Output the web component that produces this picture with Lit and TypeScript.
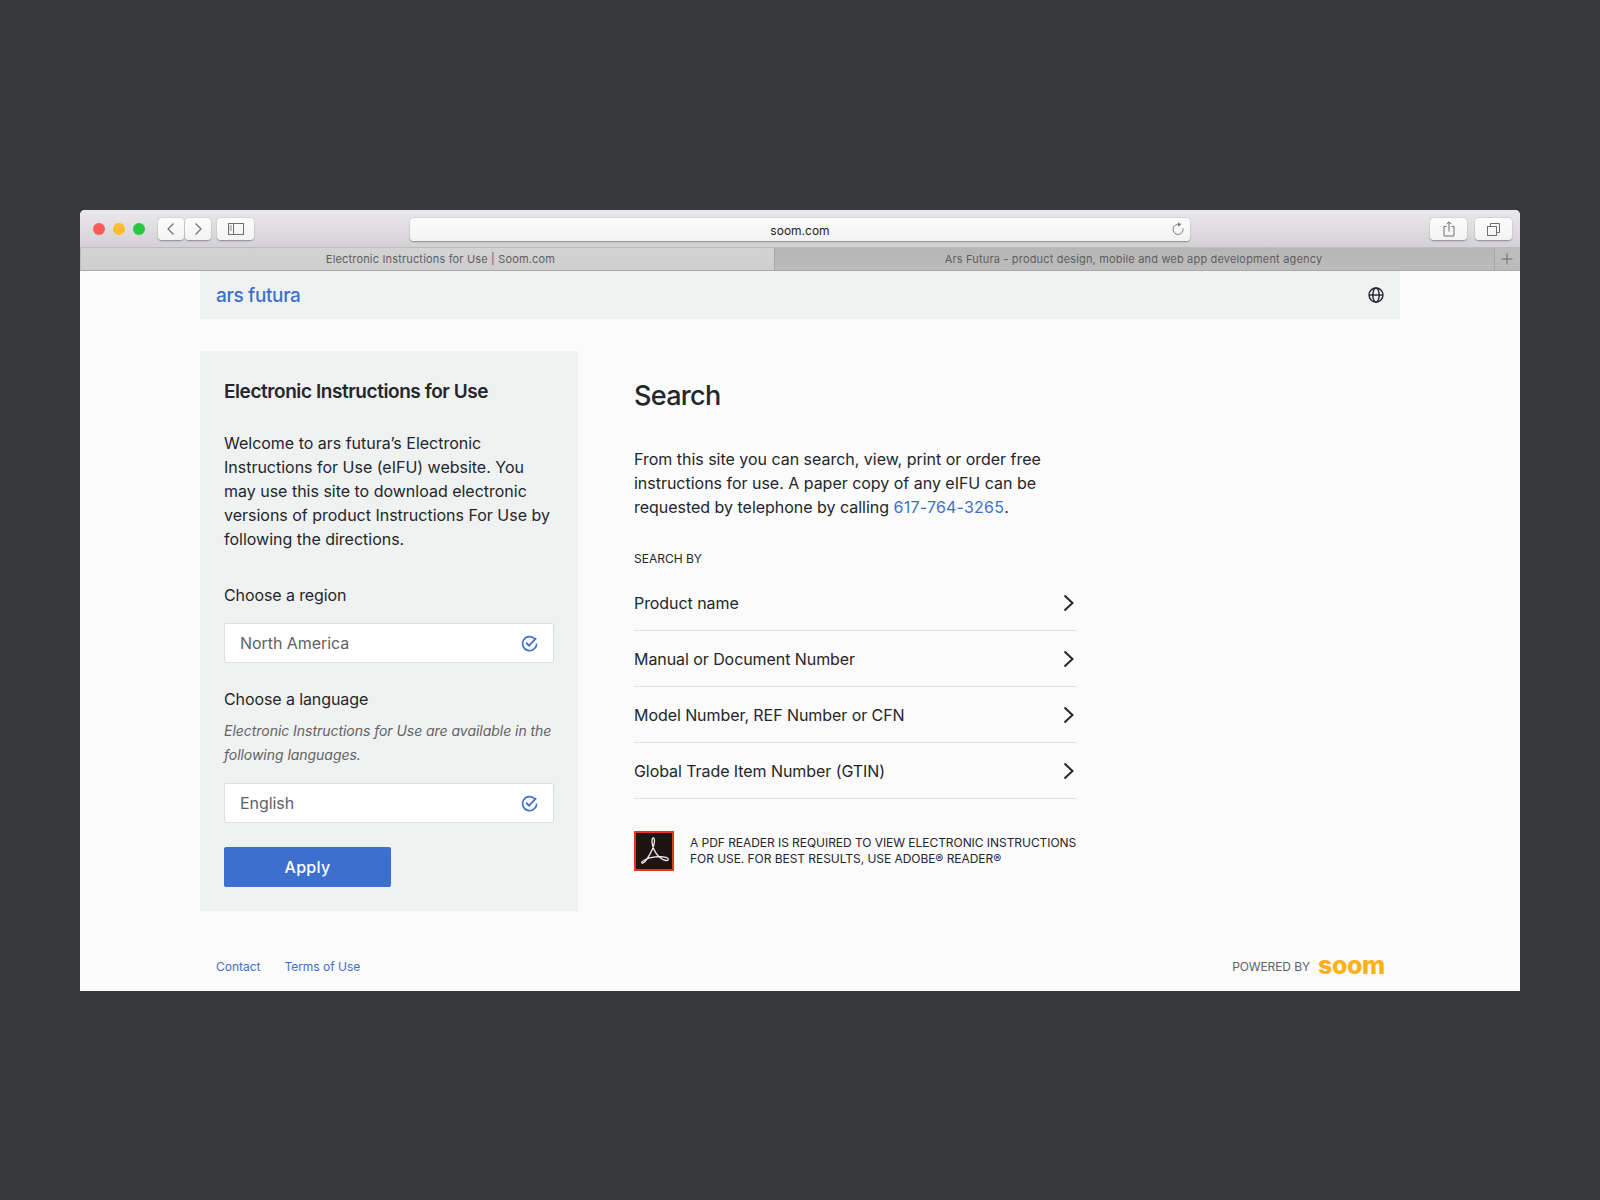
import { LitElement, html, css } from "lit";
import { customElement } from "lit/decorators.js";

const chevron = html`<svg class="chev" width="12" height="18" viewBox="0 0 12 18"><path d="M1.5 1.5 L9.5 9 L1.5 16.5" fill="none" stroke="#23262b" stroke-width="2"/></svg>`;
const check = html`<svg class="check" width="17" height="17" viewBox="0 0 17 17" fill="none" stroke="#3d70ce" stroke-width="1.6"><path d="M14 4.2 A7 7 0 1 0 15.6 8.5"/><path d="M5 7.6 L8 10.6 L15.2 3.2" stroke-width="1.8"/></svg>`;

@customElement("app-root")
export class AppRoot extends LitElement {
  static styles = css`
    :host { display: block; width: 1600px; height: 1200px; background: #38393b; font-family: Inter, "Liberation Sans", sans-serif; color: #23262b; box-sizing: border-box; padding: 210px 80px 0; }
    * { box-sizing: border-box; }
    .window { width: 1440px; height: 781px; background: #fbfbfb; border-radius: 5px 5px 0 0; overflow: hidden; display: flex; flex-direction: column; }
    .titlebar { height: 38px; flex: none; background: linear-gradient(#ebe9ec, #d3d1d4); display: flex; align-items: center; padding: 1px 8px 0 13px; border-bottom: 1px solid #bdbcbd; }
    .lights { display: flex; gap: 8px; margin-right: 13px; }
    .lights i { width: 12px; height: 12px; border-radius: 50%; display: block; }
    .tb { height: 22px; background: linear-gradient(#fcfcfc, #f3f3f3); border-radius: 4px; box-shadow: 0 0.5px 1.5px rgba(0,0,0,.35); display: flex; align-items: center; justify-content: center; flex: none; }
    .nav { display: flex; gap: 1px; margin-right: 6px; }
    .nav .tb { width: 26px; }
    .side { width: 37px; }
    .url { width: 780px; margin-left: 156px; height: 23px; justify-content: center; font-size: 12px; position: relative; color: #1d1d1f; padding-top: 2px; }
    .reload { position: absolute; right: 5px; top: 4px; }
    .right { margin-left: auto; display: flex; gap: 8px; }
    .right .tb { width: 37px; }
    .tabs { height: 23px; flex: none; display: flex; font-size: 11px; color: #5d5d5f; letter-spacing: 0.17px; border-bottom: 1px solid #a9a9aa; }
    .tab { display: flex; align-items: center; justify-content: center; }
    .tab.active { width: 694px; background: linear-gradient(#d4d3d4, #cfcecf); border-left: 1px solid #bbb; padding-left: 26px; }
    .tab.other { width: 720px; background: linear-gradient(#b6b6b6, #bcbcbc); border-left: 1px solid #a8a8a8; padding-right: 2px; }
    .tab.plus { width: 26px; background: #bcbcbc; border-left: 1px solid #a8a8a8; padding-right: 2px; }
    .page { flex: 1; width: 1200px; margin: 0 auto; display: flex; flex-direction: column; }
    .header { height: 48px; flex: none; background: #f0f2f1; display: flex; align-items: center; justify-content: space-between; padding: 0 16px; }
    .brand { color: #3d70ce; font-size: 19px; font-weight: 500; letter-spacing: -0.35px; }
    .content { display: flex; margin-top: 32px; gap: 56px; }
    .sidebar { width: 378px; height: 560px; background: #f0f2f1; padding: 29px 24px 0; flex: none; }
    .sidebar h2 { margin: 0; font-size: 19px; line-height: 24px; font-weight: 600; letter-spacing: -0.43px; }
    .sidebar p.intro { margin: 27px 0 0; font-size: 16px; line-height: 24px; letter-spacing: -0.01px; }
    .label { font-size: 16px; line-height: 24px; letter-spacing: -0.1px; }
    .label.region { margin-top: 32px; }
    .label.lang { margin-top: 24px; }
    .select { height: 40px; width: 330px; background: #fff; border: 1px solid #dcdfdf; border-radius: 2px; display: flex; align-items: center; justify-content: space-between; padding: 0 15px; font-size: 16px; color: #5f6266; letter-spacing: -0.06px; }
    .select.first { margin-top: 16px; }
    .select.second { margin-top: 16px; }
    .note { margin: 8px 0 0; font-size: 14px; line-height: 24px; font-style: italic; color: #5f6266; letter-spacing: -0.04px; }
    .apply { display: flex; width: 167px; height: 40px; margin-top: 24px; align-items: center; justify-content: center; background: #3d70ce; color: #fff; border-radius: 2px; font-size: 16px; font-weight: 500; letter-spacing: 0.3px; }
    .main { width: 442px; flex: none; }
    .main h1 { margin: 27px 0 0; font-size: 27px; line-height: 36px; font-weight: 500; letter-spacing: -0.7px; }
    .main p.lead { margin: 33px 0 0; font-size: 16px; line-height: 24px; letter-spacing: -0.02px; }
    .main p.lead a { letter-spacing: 0.22px; }
    a { color: #3d70ce; text-decoration: none; }
    .by { margin-top: 32px; font-size: 12px; line-height: 16px; }
    .rows { margin-top: 8px; }
    .row { height: 56px; display: flex; align-items: center; justify-content: space-between; border-bottom: 1px solid #dfe0e0; font-size: 16px; letter-spacing: -0.07px; padding-right: 1px; padding-top: 1px; }
    .pdf { display: flex; align-items: center; gap: 16px; margin-top: 32px; font-size: 12px; line-height: 16px; letter-spacing: -0.05px; white-space: nowrap; }
    .adobe { width: 40px; height: 40px; flex: none; display: block; }
    .footer { display: flex; align-items: center; justify-content: space-between; margin-top: 40px; padding: 0 16px; height: 30px; font-size: 12px; }
    .links { display: flex; gap: 24px; letter-spacing: -0.02px; }
    .powered { display: flex; align-items: center; gap: 8px; color: #5f6266; letter-spacing: -0.1px; }
    .soom { color: #fdb01c; font-size: 25px; line-height: 20px; font-weight: 800; letter-spacing: -0.4px; width: 66px; margin-top: -2px; }
  `;

  render() {
    return html`<div class="window">
      <div class="titlebar">
        <div class="lights"><i style="background:#fc5b57"></i><i style="background:#fdbc2e"></i><i style="background:#27c840"></i></div>
        <div class="nav">
          <div class="tb"><svg width="10" height="14" viewBox="0 0 10 14"><path d="M7.5 1.5 L2 7 L7.5 12.5" fill="none" stroke="#6f6f71" stroke-width="1.2"/></svg></div>
          <div class="tb"><svg width="10" height="14" viewBox="0 0 10 14"><path d="M2.5 1.5 L8 7 L2.5 12.5" fill="none" stroke="#6f6f71" stroke-width="1.2"/></svg></div>
        </div>
        <div class="tb side"><svg width="16" height="12" viewBox="0 0 16 12" fill="none" stroke="#6f6f71"><rect x="0.5" y="0.5" width="15" height="11"/><path d="M5.5 0.5 V11.5"/><path d="M1.5 3 H4 M1.5 5 H4 M1.5 7 H4" stroke-width="0.8"/></svg></div>
        <div class="tb url">soom.com
          <svg class="reload" width="14" height="14" viewBox="0 0 14 14" fill="none" stroke="#7a7a7c" stroke-width="1"><path d="M8.5 2.6 A5 5 0 1 0 12 6.5"/><path d="M7 0.3 L10.3 2.5 L7 4.7 Z" fill="#7a7a7c" stroke="none"/></svg>
        </div>
        <div class="right">
          <div class="tb"><svg width="12" height="16" viewBox="0 0 12 16" fill="none" stroke="#6f6f71"><path d="M3.5 5.5 H1 V15 H11 V5.5 H8.5"/><path d="M6 10.5 V1"/><path d="M3.6 3.2 L6 0.8 L8.4 3.2"/></svg></div>
          <div class="tb"><svg width="13" height="13" viewBox="0 0 13 13" fill="none" stroke="#6f6f71"><rect x="0.5" y="3.5" width="9" height="9"/><path d="M3.5 3.5 V0.5 H12.5 V9.5 H9.5"/></svg></div>
        </div>
      </div>
      <div class="tabs">
        <div class="tab active">Electronic Instructions for Use | Soom.com</div>
        <div class="tab other">Ars Futura - product design, mobile and web app development agency</div>
        <div class="tab plus"><svg width="12" height="12" viewBox="0 0 12 12"><path d="M6 0.5 V11.5 M0.5 6 H11.5" stroke="#6a6a6a" stroke-width="1"/></svg></div>
      </div>
      <div class="page">
        <div class="header">
          <div class="brand">ars futura</div>
          <svg width="16" height="16" viewBox="0 0 16 16" fill="none" stroke="#23262b" stroke-width="1.4"><circle cx="8" cy="8" r="7"/><ellipse cx="8" cy="8" rx="3.2" ry="7"/><path d="M1 8 H15"/></svg>
        </div>
        <div class="content">
          <div class="sidebar">
            <h2>Electronic Instructions for Use</h2>
            <p class="intro">Welcome to ars futura’s Electronic<br>Instructions for Use (eIFU) website. You<br>may use this site to download electronic<br>versions of product Instructions For Use by<br>following the directions.</p>
            <div class="label region">Choose a region</div>
            <div class="select first"><span>North America</span>${check}</div>
            <div class="label lang">Choose a language</div>
            <p class="note">Electronic Instructions for Use are available in the<br>following languages.</p>
            <div class="select second"><span>English</span>${check}</div>
            <div class="apply">Apply</div>
          </div>
          <div class="main">
            <h1>Search</h1>
            <p class="lead">From this site you can search, view, print or order free<br>instructions for use. A paper copy of any eIFU can be<br>requested by telephone by calling <a>617-764-3265</a>.</p>
            <div class="by">SEARCH BY</div>
            <div class="rows">
              <div class="row"><span>Product name</span>${chevron}</div>
              <div class="row"><span>Manual or Document Number</span>${chevron}</div>
              <div class="row"><span>Model Number, REF Number or CFN</span>${chevron}</div>
              <div class="row"><span>Global Trade Item Number (GTIN)</span>${chevron}</div>
            </div>
            <div class="pdf">
              <svg class="adobe" viewBox="0 0 40 40">
                <rect x="1" y="1" width="38" height="38" fill="#1f1414" stroke="#e2361f" stroke-width="2"/>
                <path d="M8 32 C10 33 15 26 18.5 18 C21 12 21 7 19.3 7 C17.5 7 17.5 13 20 18.5 C22.5 24 27 28.5 32 29.5 C35 30 35 27 32 26.3 C26 25 16 26 11.5 28.5 C8.5 30 7 31.5 8 32 Z" fill="none" stroke="#f2eeee" stroke-width="1.3"/>
              </svg>
              <div>A PDF READER IS REQUIRED TO VIEW ELECTRONIC INSTRUCTIONS<br>FOR USE. FOR BEST RESULTS, USE ADOBE® READER®</div>
            </div>
          </div>
        </div>
        <div class="footer">
          <div class="links"><a>Contact</a><a>Terms of Use</a></div>
          <div class="powered"><span>POWERED BY</span><span class="soom">soom</span></div>
        </div>
      </div>
    </div>`;
  }
}
